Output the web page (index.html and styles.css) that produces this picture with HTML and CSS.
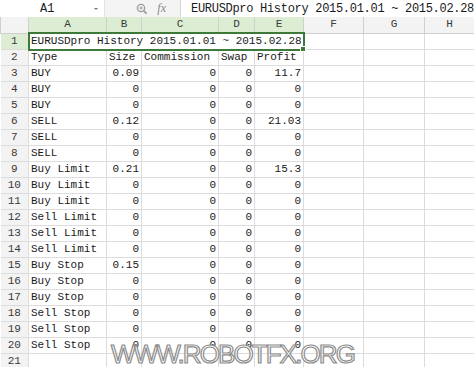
FILE: index.html
```html
<!DOCTYPE html>
<html lang="en">
  <head>
    <meta charset="UTF-8" />
    <title>EURUSDpro History</title>
    <link rel="stylesheet" href="styles.css">
  </head>
  <body>
    <div class="sheet">
      <div class="formula-bar">
        <div class="name-box">
          <span class="cell-ref">A1</span>
          <span class="drop"></span>
        </div>
        <div class="fx-tools">
          <svg class="zoom-icon" width="12" height="12" viewBox="0 0 12 12">
            <circle cx="5" cy="5" r="3.6" fill="none" stroke="#9a9a9a" stroke-width="1.3" />
            <path d="M3.4 5h3.2M5 3.4v3.2" stroke="#9a9a9a" stroke-width="1" />
            <path d="M7.6 7.6l3 3" stroke="#9a9a9a" stroke-width="1.6" />
          </svg>
          <span class="fx">fx</span>
        </div>
        <div class="formula">EURUSDpro History 2015.01.01 ~ 2015.02.28</div>
      </div>

      <table class="grid">
        <colgroup>
          <col class="c-head" />
          <col class="c-a" />
          <col class="c-b" />
          <col class="c-c" />
          <col class="c-d" />
          <col class="c-e" />
          <col class="c-f" />
          <col class="c-g" />
          <col class="c-h" />
        </colgroup>
        <thead>
          <tr>
            <th class="corner"></th>
            <th class="on">A</th>
            <th class="on">B</th>
            <th class="on">C</th>
            <th class="on">D</th>
            <th class="on">E</th>
            <th>F</th>
            <th>G</th>
            <th>H</th>
          </tr>
        </thead>
        <tbody>
          <tr>
            <th class="on">1</th>
            <td colspan="5" class="title selected">EURUSDpro History 2015.01.01 ~ 2015.02.28</td>
            <td></td><td></td><td></td>
          </tr>
          <tr>
            <th>2</th>
            <td>Type</td><td>Size</td><td>Commission</td><td>Swap</td><td>Profit</td>
            <td></td><td></td><td></td>
          </tr>
          <tr>
            <th>3</th>
            <td>BUY</td><td class="num">0.09</td><td class="num">0</td><td class="num">0</td><td class="num">11.7</td>
            <td></td><td></td><td></td>
          </tr>
          <tr>
            <th>4</th>
            <td>BUY</td><td class="num">0</td><td class="num">0</td><td class="num">0</td><td class="num">0</td>
            <td></td><td></td><td></td>
          </tr>
          <tr>
            <th>5</th>
            <td>BUY</td><td class="num">0</td><td class="num">0</td><td class="num">0</td><td class="num">0</td>
            <td></td><td></td><td></td>
          </tr>
          <tr>
            <th>6</th>
            <td>SELL</td><td class="num">0.12</td><td class="num">0</td><td class="num">0</td><td class="num">21.03</td>
            <td></td><td></td><td></td>
          </tr>
          <tr>
            <th>7</th>
            <td>SELL</td><td class="num">0</td><td class="num">0</td><td class="num">0</td><td class="num">0</td>
            <td></td><td></td><td></td>
          </tr>
          <tr>
            <th>8</th>
            <td>SELL</td><td class="num">0</td><td class="num">0</td><td class="num">0</td><td class="num">0</td>
            <td></td><td></td><td></td>
          </tr>
          <tr>
            <th>9</th>
            <td>Buy Limit</td><td class="num">0.21</td><td class="num">0</td><td class="num">0</td><td class="num">15.3</td>
            <td></td><td></td><td></td>
          </tr>
          <tr>
            <th>10</th>
            <td>Buy Limit</td><td class="num">0</td><td class="num">0</td><td class="num">0</td><td class="num">0</td>
            <td></td><td></td><td></td>
          </tr>
          <tr>
            <th>11</th>
            <td>Buy Limit</td><td class="num">0</td><td class="num">0</td><td class="num">0</td><td class="num">0</td>
            <td></td><td></td><td></td>
          </tr>
          <tr>
            <th>12</th>
            <td>Sell Limit</td><td class="num">0</td><td class="num">0</td><td class="num">0</td><td class="num">0</td>
            <td></td><td></td><td></td>
          </tr>
          <tr>
            <th>13</th>
            <td>Sell Limit</td><td class="num">0</td><td class="num">0</td><td class="num">0</td><td class="num">0</td>
            <td></td><td></td><td></td>
          </tr>
          <tr>
            <th>14</th>
            <td>Sell Limit</td><td class="num">0</td><td class="num">0</td><td class="num">0</td><td class="num">0</td>
            <td></td><td></td><td></td>
          </tr>
          <tr>
            <th>15</th>
            <td>Buy Stop</td><td class="num">0.15</td><td class="num">0</td><td class="num">0</td><td class="num">0</td>
            <td></td><td></td><td></td>
          </tr>
          <tr>
            <th>16</th>
            <td>Buy Stop</td><td class="num">0</td><td class="num">0</td><td class="num">0</td><td class="num">0</td>
            <td></td><td></td><td></td>
          </tr>
          <tr>
            <th>17</th>
            <td>Buy Stop</td><td class="num">0</td><td class="num">0</td><td class="num">0</td><td class="num">0</td>
            <td></td><td></td><td></td>
          </tr>
          <tr>
            <th>18</th>
            <td>Sell Stop</td><td class="num">0</td><td class="num">0</td><td class="num">0</td><td class="num">0</td>
            <td></td><td></td><td></td>
          </tr>
          <tr>
            <th>19</th>
            <td>Sell Stop</td><td class="num">0</td><td class="num">0</td><td class="num">0</td><td class="num">0</td>
            <td></td><td></td><td></td>
          </tr>
          <tr>
            <th>20</th>
            <td>Sell Stop</td><td class="num">0</td><td class="num">0</td><td class="num">0</td><td class="num">0</td>
            <td></td><td></td><td></td>
          </tr>
          <tr>
            <th>21</th>
            <td></td><td></td><td></td><td></td><td></td>
            <td></td><td></td><td></td>
          </tr>
        </tbody>
      </table>

      <div class="watermark">WWW.ROBOTFX.ORG</div>
    </div>
  </body>
</html>
```

FILE: styles.css
```css
body {
  margin: 0;
  background: #ffffff;
  overflow: hidden;
  font-family: "Liberation Mono", "DejaVu Sans Mono", monospace;
  font-size: 11px;
  color: #1a1a1a;
}

.sheet {
  position: relative;
  width: 474px;
  height: 367px;
  overflow: hidden;
}

/* formula bar */
.formula-bar {
  display: flex;
  height: 17px;
  align-items: stretch;
  background: #ffffff;
}

.name-box {
  width: 105px;
  display: flex;
  align-items: center;
  position: relative;
}

.cell-ref {
  margin-left: 40px;
  font-size: 12px;
}

.drop {
  margin-left: auto;
  margin-right: 6px;
  width: 0;
  height: 0;
  border-left: 2px solid transparent;
  border-right: 2px solid transparent;
  border-top: 2px solid #777;
}

.fx-tools {
  width: 77px;
  background: #f4f4f4;
  border-left: 1px solid #e2e2e2;
  border-right: 1px solid #d6d6d6;
  display: flex;
  align-items: center;
  padding-left: 31px;
  box-sizing: border-box;
  gap: 9px;
}

.fx {
  font-family: "Liberation Serif", serif;
  font-style: italic;
  font-size: 12px;
  color: #8a8a8a;
}

.formula {
  padding-left: 10px;
  display: flex;
  align-items: center;
  font-size: 12px;
  white-space: nowrap;
  letter-spacing: -0.3px;
}

/* grid */
.grid {
  border-collapse: collapse;
  table-layout: fixed;
  width: 474px;
}

.c-head { width: 28px; }
.c-a { width: 78px; }
.c-b { width: 35px; }
.c-c { width: 77px; }
.c-d { width: 36px; }
.c-e { width: 49px; }
.c-f { width: 60px; }
.c-g { width: 61px; }
.c-h { width: 50px; }

.grid th,
.grid td {
  height: 15px;
  padding: 0 2px;
  border: 1px solid #dcdcdc;
  white-space: nowrap;
  overflow: hidden;
  font-weight: normal;
  line-height: 15px;
}

.grid thead th {
  background: #f3f3f3;
  color: #3a3a3a;
  text-align: center;
  border-color: #d0d0d0;
  border-top: none;
}

.grid thead th.on {
  background: #dcedd4;
  border-bottom: 2px solid #4d8a47;
}

.grid tbody th {
  background: #f3f3f3;
  color: #3a3a3a;
  text-align: center;
  border-left: none;
  padding: 0;
}

.grid tbody th.on {
  background: #dcedd4;
}

.grid td {
  text-align: left;
}

.grid td.num {
  text-align: right;
}

.grid td.title {
  position: relative;
  overflow: visible;
}

.grid td.selected {
  outline: 2px solid #3d7a3a;
  outline-offset: -1px;
}

.grid td.selected::after {
  content: "";
  position: absolute;
  right: -3px;
  bottom: -3px;
  width: 4px;
  height: 4px;
  background: #3d7a3a;
  border: 1px solid #ffffff;
}

/* watermark over the sheet */
.watermark {
  position: absolute;
  left: 111px;
  top: 339px;
  font-family: "Liberation Sans", Arial, sans-serif;
  font-size: 26px;
  letter-spacing: -1.9px;
  color: #ffffff;
  -webkit-text-stroke: 1.2px #8c8c8c;
  white-space: nowrap;
}
```
